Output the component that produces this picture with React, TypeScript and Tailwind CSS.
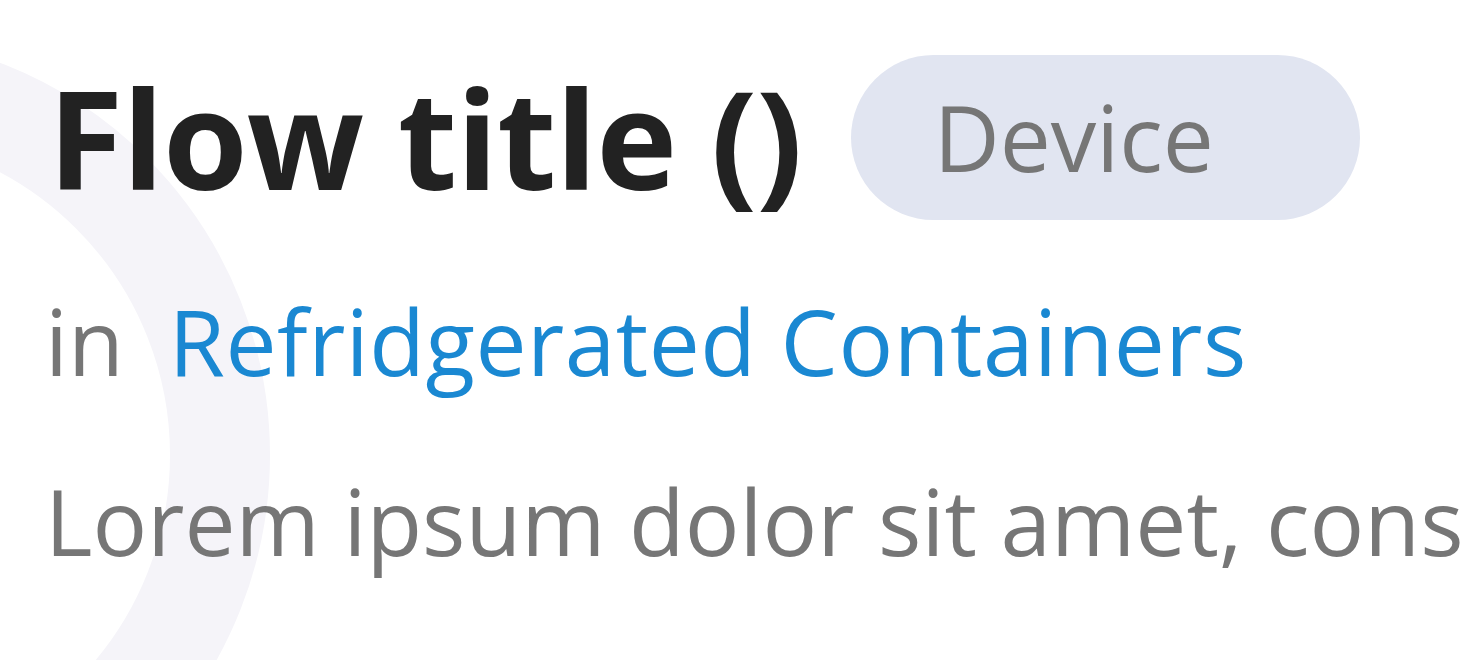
export default function App() {
  return (
    <div className="relative h-[660px] w-[1460px] overflow-hidden bg-white font-['Open_Sans',sans-serif]">
      {/* decorative ring behind the header */}
      <div className="absolute left-[-570px] top-[35px] h-[840px] w-[840px] rounded-full border-[100px] border-[#f5f4f9]" />

      <div className="relative pl-[45px] pt-[55px]">
        <div className="flex h-[165px] items-center">
          <h1 className="ml-[3px] whitespace-nowrap text-[137px] font-bold leading-none tracking-[-1px] text-[#222222]">Flow title ()</h1>
          <span className="ml-[49px] flex h-[165px] w-[509px] items-center rounded-full bg-[#e1e5f1] pl-[83px] text-[91px] leading-none text-[#767676]">
            Device
          </span>
        </div>

        <div className="mt-[76px] flex items-center gap-[45px] whitespace-nowrap text-[91px] leading-none">
          <span className="text-[#767676]">in</span>
          <a className="tracking-[0.5px] text-[#1a88d2]">Refridgerated Containers</a>
        </div>

        <p className="mt-[89px] whitespace-nowrap text-[91px] leading-none text-[#767676]">
          Lorem ipsum dolor sit amet, consectetur adipiscing elit, sed do eiusmod tempor incididunt
        </p>
      </div>
    </div>
  );
}
